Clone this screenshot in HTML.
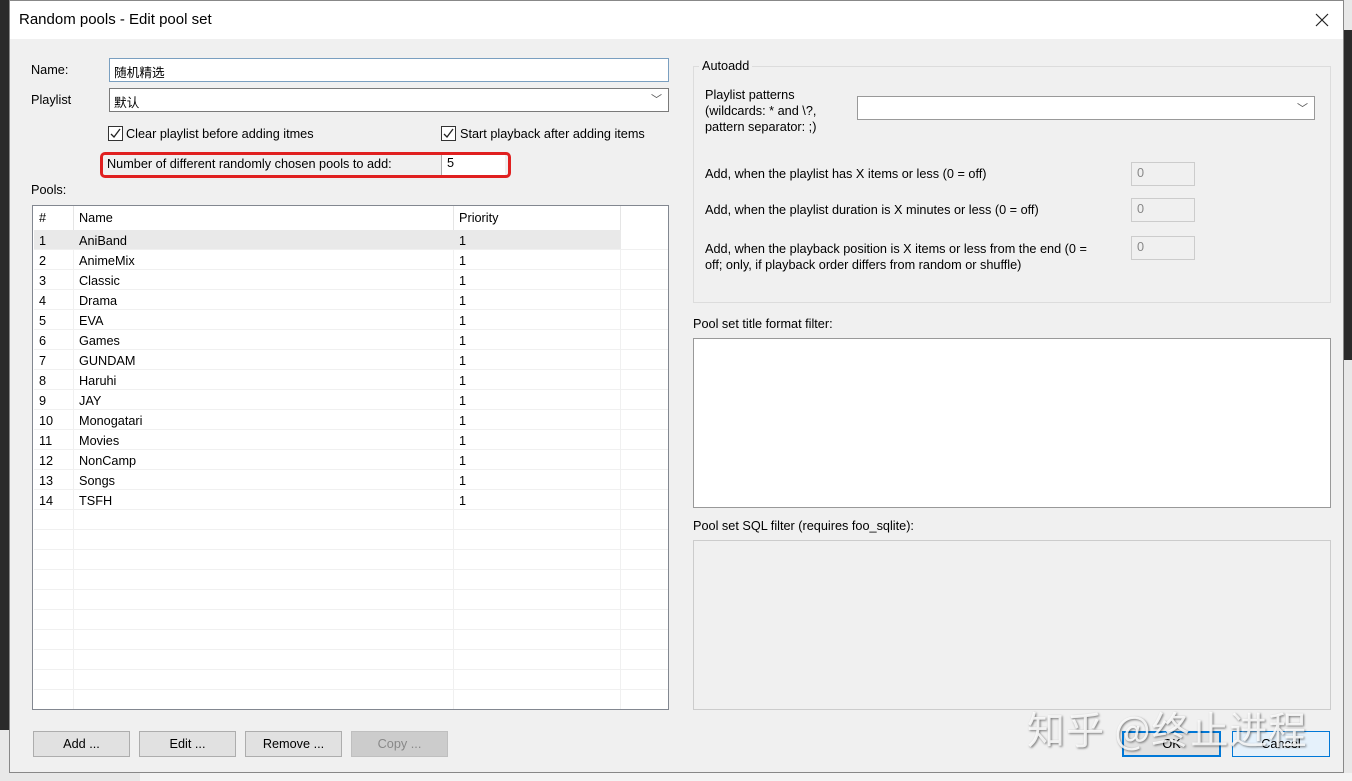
<!DOCTYPE html>
<html><head><meta charset="utf-8"><style>
*{margin:0;padding:0;box-sizing:border-box}
body{width:1352px;height:781px;position:relative;overflow:hidden;background:#e8e8e8;font-family:"Liberation Sans","Noto Sans CJK SC",sans-serif;font-size:12.7px;color:#000}
.a{position:absolute;white-space:nowrap}
.dlg{position:absolute;left:9px;top:0;width:1335px;height:773px;background:#f0f0f0;border:1px solid #888}
.title{position:absolute;left:0;top:0;width:100%;height:38px;background:#fff}
.box{position:absolute;background:#fff;border:1px solid #7a7a7a}
.btn{position:absolute;height:26px;width:97px;background:#e1e1e1;border:1px solid #adadad;text-align:center;line-height:24px}
.cb{position:absolute;width:15px;height:15px;border:1px solid #333;background:#fff}
.dis{position:absolute;width:64px;height:24px;border:1px solid #ccc;background:#f0f0f0;color:#888;padding-left:5px;line-height:20px}
.row{position:absolute;left:1px;width:634px;height:20px;border-bottom:1px solid #f0f0f0}
</style></head><body>
<div class="a" style="left:0;top:0;width:9px;height:730px;background:#2b2b2b"></div>
<div class="a" style="left:1344px;top:30px;width:8px;height:330px;background:#2b2b2b"></div>
<div class="a" style="left:140px;top:773px;width:1240px;height:8px;background:#f4f4f4"></div>
<div class="dlg">
<div class="title"></div>
<div class="a" style="left:9px;top:10px;font-size:15px">Random pools - Edit pool set</div>
<svg class="a" style="left:1305px;top:12px" width="14" height="14"><path d="M1 1L13 13M13 1L1 13" stroke="#222" stroke-width="1.2"/></svg>
</div>
<div class="a" style="left:31px;top:63px">Name:</div>
<div class="box" style="left:109px;top:58px;width:560px;height:24px;border-color:#7a9fc0;padding:3px 4px">随机精选</div>
<div class="a" style="left:31px;top:93px">Playlist</div>
<div class="box" style="left:109px;top:88px;width:560px;height:24px;padding:3px 4px">默认<span class="a" style="right:6px;top:2px;font-size:11px;color:#555">﹀</span></div>
<div class="cb" style="left:108px;top:126px"><svg width="13" height="13"><path d="M2 7l3 3 6-8" stroke="#222" stroke-width="1.3" fill="none"/></svg></div>
<div class="a" style="left:126px;top:127px">Clear playlist before adding itmes</div>
<div class="cb" style="left:441px;top:126px"><svg width="13" height="13"><path d="M2 7l3 3 6-8" stroke="#222" stroke-width="1.3" fill="none"/></svg></div>
<div class="a" style="left:460px;top:127px">Start playback after adding items</div>
<div class="a" style="left:100px;top:152px;width:411px;height:26px;border:3px solid #e02020;border-radius:5px"></div>
<div class="a" style="left:107px;top:157px">Number of different randomly chosen pools to add:</div>
<div class="a" style="left:441px;top:155px;width:64px;height:20px;background:#fff;border-left:1px solid #aaa;padding:1px 5px">5</div>
<div class="a" style="left:31px;top:183px">Pools:</div>
<div class="box" style="left:32px;top:205px;width:637px;height:505px;border-color:#828790;overflow:hidden">
<div class="a" style="left:40px;top:0;width:1px;height:503px;background:#f0f0f0"></div>
<div class="a" style="left:420px;top:0;width:1px;height:503px;background:#f0f0f0"></div>
<div class="a" style="left:587px;top:0;width:1px;height:503px;background:#f0f0f0"></div>
<div class="a" style="left:6px;top:5px">#</div><div class="a" style="left:46px;top:5px">Name</div><div class="a" style="left:426px;top:5px">Priority</div>
<div class="a" style="left:40px;top:0;width:1px;height:24px;background:#e5e5e5"></div>
<div class="a" style="left:420px;top:0;width:1px;height:24px;background:#e5e5e5"></div>
<div class="a" style="left:587px;top:0;width:1px;height:24px;background:#e5e5e5"></div>
<div class="a" style="left:1px;top:24px;width:587px;height:19px;background:#e9e9e9"></div>
<div style="position:absolute;left:0;top:24px;width:635px">
<div class="row" style="top:0"></div><div class="row" style="top:20px"></div><div class="row" style="top:40px"></div><div class="row" style="top:60px"></div><div class="row" style="top:80px"></div><div class="row" style="top:100px"></div><div class="row" style="top:120px"></div><div class="row" style="top:140px"></div><div class="row" style="top:160px"></div><div class="row" style="top:180px"></div><div class="row" style="top:200px"></div><div class="row" style="top:220px"></div><div class="row" style="top:240px"></div><div class="row" style="top:260px"></div><div class="row" style="top:280px"></div><div class="row" style="top:300px"></div><div class="row" style="top:320px"></div><div class="row" style="top:340px"></div><div class="row" style="top:360px"></div><div class="row" style="top:380px"></div><div class="row" style="top:400px"></div><div class="row" style="top:420px"></div><div class="row" style="top:440px"></div><div class="row" style="top:460px"></div>
</div>
<div style="position:absolute;left:6px;top:25px;line-height:20px">1<br>2<br>3<br>4<br>5<br>6<br>7<br>8<br>9<br>10<br>11<br>12<br>13<br>14</div>
<div style="position:absolute;left:46px;top:25px;line-height:20px">AniBand<br>AnimeMix<br>Classic<br>Drama<br>EVA<br>Games<br>GUNDAM<br>Haruhi<br>JAY<br>Monogatari<br>Movies<br>NonCamp<br>Songs<br>TSFH</div>
<div style="position:absolute;left:426px;top:25px;line-height:20px">1<br>1<br>1<br>1<br>1<br>1<br>1<br>1<br>1<br>1<br>1<br>1<br>1<br>1</div>
</div>
<div class="btn" style="left:33px;top:731px">Add ...</div>
<div class="btn" style="left:139px;top:731px">Edit ...</div>
<div class="btn" style="left:245px;top:731px">Remove ...</div>
<div class="btn" style="left:351px;top:731px;background:#ccc;border-color:#bfbfbf;color:#888">Copy ...</div>
<div class="btn" style="left:1122px;top:731px;width:99px;border:2px solid #0078d7;background:#e1e1e1;line-height:22px">OK</div>
<div class="btn" style="left:1232px;top:731px;width:98px;border-color:#0078d7;background:#e5f1fb">Cancel</div>
<div class="a" style="left:693px;top:66px;width:638px;height:237px;border:1px solid #dcdcdc"></div>
<div class="a" style="left:699px;top:59px;background:#f0f0f0;padding:0 3px">Autoadd</div>
<div class="a" style="left:705px;top:87px;line-height:16px">Playlist patterns<br>(wildcards: * and \?,<br>pattern separator: ;)</div>
<div class="box" style="left:857px;top:96px;width:458px;height:24px;border-color:#999"><span class="a" style="right:6px;top:3px;font-size:11px;color:#555">﹀</span></div>
<div class="a" style="left:705px;top:167px">Add, when the playlist has X items or less (0 = off)</div>
<div class="a" style="left:705px;top:203px">Add, when the playlist duration is X minutes or less (0 = off)</div>
<div class="a" style="left:705px;top:241px;line-height:16px">Add, when the playback position is X items or less from the end (0 =<br>off; only, if playback order differs from random or shuffle)</div>
<div class="dis" style="left:1131px;top:162px">0</div>
<div class="dis" style="left:1131px;top:198px">0</div>
<div class="dis" style="left:1131px;top:236px">0</div>
<div class="a" style="left:693px;top:317px">Pool set title format filter:</div>
<div class="box" style="left:693px;top:338px;width:638px;height:170px;border-color:#999"></div>
<div class="a" style="left:693px;top:519px">Pool set SQL filter (requires foo_sqlite):</div>
<div class="a" style="left:693px;top:540px;width:638px;height:170px;border:1px solid #ccc"></div>
<div class="a" style="left:1027px;top:700px;font-size:38px;color:rgba(255,255,255,0.85);text-shadow:1px 1px 2px rgba(0,0,0,0.5);font-family:'Noto Sans CJK SC',sans-serif;letter-spacing:1px">知乎 @终止进程</div>
</body></html>
